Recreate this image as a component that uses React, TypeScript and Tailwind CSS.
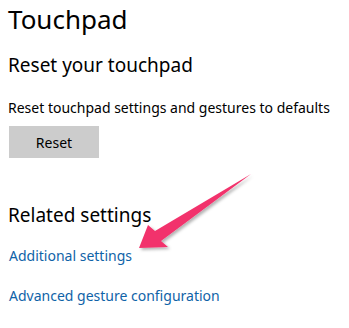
export default function App() {
  const font = { fontFamily: '"Noto Sans", "Open Sans", sans-serif' };
  return (
    <div className="relative w-[349px] h-[328px] bg-white overflow-hidden text-black" style={font}>
      <div className="flex flex-col pl-[8px]">
        <h1 className="text-[26px] leading-[26px] mt-[6px] font-normal">Touchpad</h1>
        <h2 className="text-[19px] leading-[20px] mt-[23px] font-normal">Reset your touchpad</h2>
        <p className="text-[14px] leading-[16px] mt-[25px]">Reset touchpad settings and gestures to defaults</p>
        <button className="mt-[10px] ml-[1px] w-[90px] h-[32px] bg-[#cccccc] text-[14px] text-black">Reset</button>
        <h2 className="text-[19px] leading-[20px] mt-[47px] font-normal">Related settings</h2>
        <a className="text-[14px] leading-[16px] mt-[23px] ml-[1px] text-[#0f63a8]">Additional settings</a>
        <a className="text-[14px] leading-[16px] mt-[24px] ml-[1px] text-[#0f63a8]">Advanced gesture configuration</a>
      </div>
      <svg className="absolute left-0 top-0" width="349" height="328" viewBox="0 0 349 328">
        <defs>
          <filter id="sh" x="-20%" y="-20%" width="140%" height="140%">
            <feDropShadow dx="2" dy="2" stdDeviation="1.5" floodColor="#000" floodOpacity="0.3" />
          </filter>
        </defs>
        <polygon
          points="139,248 148,225 155,231 251,174 161,241 168,247"
          fill="#f2336c"
          filter="url(#sh)"
        />
      </svg>
    </div>
  );
}
